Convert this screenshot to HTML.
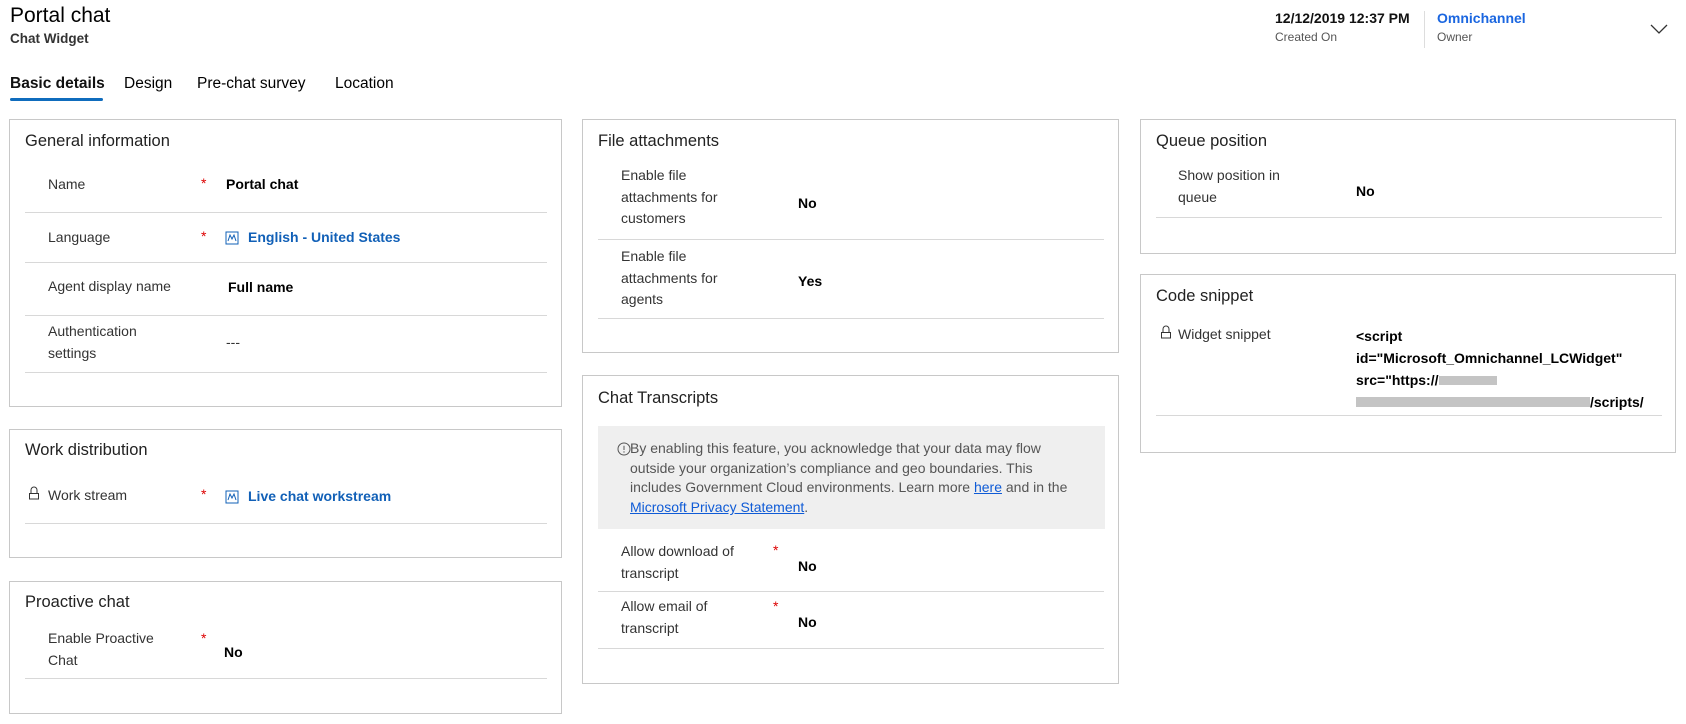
<!DOCTYPE html>
<html><head><meta charset="utf-8"><style>
*{margin:0;padding:0;box-sizing:border-box}
body{width:1686px;height:724px;background:#fff;font-family:"Liberation Sans",sans-serif;color:#000;position:relative;overflow:hidden}
.a{position:absolute;white-space:nowrap}
.box{position:absolute;border:1px solid #c8c8c8;background:#fff}
.t{position:absolute;font-size:16.5px;color:#222;left:15px}
.l{position:absolute;font-size:14px;color:#333;line-height:21.5px;white-space:nowrap}
.v{position:absolute;font-size:14px;font-weight:bold;color:#000;white-space:nowrap}
.s{position:absolute;color:#d00;font-size:14px}
.hr{position:absolute;height:1px;background:#d8d8d8}
.lk{color:#1160b7}
</style></head><body>
<div class="a" style="left:10px;top:4px;font-size:21px">Portal chat</div>
<div class="a" style="left:10px;top:31px;font-size:13.5px;font-weight:bold;color:#333">Chat Widget</div>
<div class="a" style="left:10px;top:75px;font-size:15.5px;font-weight:bold;color:#111">Basic details</div>
<div class="a" style="left:10px;top:98px;width:93px;height:3px;background:#0f6cbd;border-radius:2px"></div>
<div class="a" style="left:124px;top:75px;font-size:15.5px">Design</div>
<div class="a" style="left:197px;top:75px;font-size:15.5px">Pre-chat survey</div>
<div class="a" style="left:335px;top:75px;font-size:15.5px">Location</div>

<div class="a" style="left:1275px;top:10px;font-size:14px;font-weight:bold;color:#111">12/12/2019 12:37 PM</div>
<div class="a" style="left:1275px;top:30px;font-size:12px;color:#555">Created On</div>
<div class="a" style="left:1424px;top:11px;width:1px;height:37px;background:#ddd"></div>
<div class="a" style="left:1437px;top:10px;font-size:14px;font-weight:bold;color:#1a66e0">Omnichannel</div>
<div class="a" style="left:1437px;top:30px;font-size:12px;color:#555">Owner</div>
<svg class="a" style="left:1650px;top:23px" width="18" height="12"><path d="M1 2 L9 10 L17 2" fill="none" stroke="#333" stroke-width="1.3"/></svg>

<div class="box" style="left:9px;top:119px;width:553px;height:288px">
<div class="t" style="top:12px">General information</div>
<div class="l" style="left:38px;top:54px">Name</div><div class="s" style="left:191px;top:55px">*</div><div class="v" style="left:216px;top:56px">Portal chat</div>
<div class="hr" style="left:15px;top:92px;width:522px"></div>
<div class="l" style="left:38px;top:107px">Language</div><div class="s" style="left:191px;top:108px">*</div>
<svg class="a" style="left:215px;top:111px" width="14" height="14"><rect x="1" y="1" width="12" height="12" fill="none" stroke="#1160b7"/><path d="M3 10 L5 4 L7 8 L9 4 L11 10" fill="none" stroke="#1160b7"/></svg>
<div class="v lk" style="left:238px;top:109px">English - United States</div>
<div class="hr" style="left:15px;top:142px;width:522px"></div>
<div class="l" style="left:38px;top:156px">Agent display name</div><div class="v" style="left:218px;top:159px">Full name</div>
<div class="hr" style="left:15px;top:195px;width:522px"></div>
<div class="l" style="left:38px;top:201px">Authentication<br>settings</div><div class="l" style="left:216px;top:212px">---</div>
<div class="hr" style="left:15px;top:252px;width:522px"></div>
</div>

<div class="box" style="left:9px;top:429px;width:553px;height:129px">
<div class="t" style="top:11px">Work distribution</div>
<svg class="a" style="left:18px;top:56px" width="12" height="14"><path d="M3 7 V4 a3 3 0 0 1 6 0 V7 M1.5 7.5 h9 v5.5 h-9z" fill="none" stroke="#333"/></svg>
<div class="l" style="left:38px;top:55px">Work stream</div><div class="s" style="left:191px;top:56px">*</div>
<svg class="a" style="left:215px;top:60px" width="14" height="14"><rect x="1" y="1" width="12" height="12" fill="none" stroke="#1160b7"/><path d="M3 10 L5 4 L7 8 L9 4 L11 10" fill="none" stroke="#1160b7"/></svg>
<div class="v lk" style="left:238px;top:58px">Live chat workstream</div>
<div class="hr" style="left:15px;top:93px;width:522px"></div>
</div>

<div class="box" style="left:9px;top:581px;width:553px;height:133px">
<div class="t" style="top:11px">Proactive chat</div>
<div class="l" style="left:38px;top:46px">Enable Proactive<br>Chat</div><div class="s" style="left:191px;top:48px">*</div><div class="v" style="left:214px;top:62px">No</div>
<div class="hr" style="left:15px;top:96px;width:522px"></div>
</div>

<div class="box" style="left:582px;top:119px;width:537px;height:234px">
<div class="t" style="top:12px">File attachments</div>
<div class="l" style="left:38px;top:45px">Enable file<br>attachments for<br>customers</div><div class="v" style="left:215px;top:75px">No</div>
<div class="hr" style="left:15px;top:119px;width:506px"></div>
<div class="l" style="left:38px;top:126px">Enable file<br>attachments for<br>agents</div><div class="v" style="left:215px;top:153px">Yes</div>
<div class="hr" style="left:15px;top:198px;width:506px"></div>
</div>

<div class="box" style="left:582px;top:375px;width:537px;height:309px">
<div class="t" style="top:13px">Chat Transcripts</div>
<div class="a" style="left:15px;top:50px;width:507px;height:103px;background:#efefef"></div>
<svg class="a" style="left:34px;top:66px" width="14" height="14"><circle cx="7" cy="7" r="6" fill="none" stroke="#555"/><path d="M7 3.8v4.2M7 9.3v1.3" stroke="#555"/></svg>
<div class="a" style="left:47px;top:63px;font-size:14px;line-height:19.7px;color:#555">By enabling this feature, you acknowledge that your data may flow<br>outside your organization’s compliance and geo boundaries. This<br>includes Government Cloud environments. Learn more <u style="color:#0f5bd6">here</u> and in the<br><u style="color:#0f5bd6">Microsoft Privacy Statement</u>.</div>
<div class="l" style="left:38px;top:165px">Allow download of<br>transcript</div><div class="s" style="left:190px;top:166px">*</div><div class="v" style="left:215px;top:182px">No</div>
<div class="hr" style="left:15px;top:215px;width:506px"></div>
<div class="l" style="left:38px;top:220px">Allow email of<br>transcript</div><div class="s" style="left:190px;top:222px">*</div><div class="v" style="left:215px;top:238px">No</div>
<div class="hr" style="left:15px;top:272px;width:506px"></div>
</div>

<div class="box" style="left:1140px;top:119px;width:536px;height:135px">
<div class="t" style="top:12px">Queue position</div>
<div class="l" style="left:37px;top:45px">Show position in<br>queue</div><div class="v" style="left:215px;top:63px">No</div>
<div class="hr" style="left:15px;top:97px;width:506px"></div>
</div>

<div class="box" style="left:1140px;top:274px;width:536px;height:179px">
<div class="t" style="top:12px">Code snippet</div>
<svg class="a" style="left:19px;top:50px" width="12" height="14"><path d="M3 7 V4 a3 3 0 0 1 6 0 V7 M1.5 7.5 h9 v5.5 h-9z" fill="none" stroke="#333"/></svg>
<div class="l" style="left:37px;top:49px">Widget snippet</div>
<div class="a" style="left:215px;top:50px;font-size:14px;font-weight:bold;line-height:22px">&lt;script<br>id="Microsoft_Omnichannel_LCWidget"<br>src="https://<span style="display:inline-block;width:58px;height:9px;background:#c4c4c4"></span><br><span style="display:inline-block;width:234px;height:10px;background:#c4c4c4"></span>/scripts/</div>
<div class="hr" style="left:15px;top:140px;width:506px"></div>
</div>
</body></html>
